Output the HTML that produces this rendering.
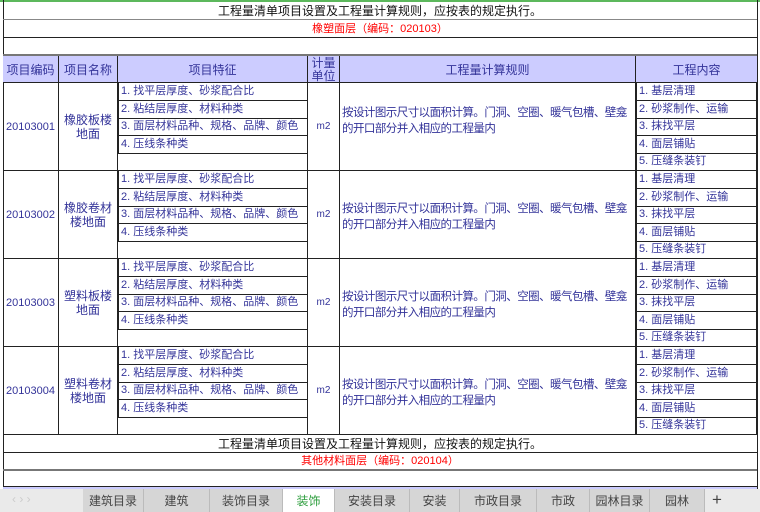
<!DOCTYPE html>
<html><head><meta charset="utf-8"><style>
*{margin:0;padding:0;box-sizing:border-box}
body{width:760px;height:512px;overflow:hidden;background:#fff;font-family:"Liberation Sans","Noto Sans CJK SC",sans-serif;font-size:11px;color:#333399;position:relative}
.a{position:absolute}
.hl{position:absolute;left:3px;width:754px;height:1px;background:#222}
.c{position:absolute;display:flex;align-items:center;justify-content:center;text-align:center;line-height:14px}
.blk{position:absolute;left:3px;width:754px;height:88px;border-bottom:1px solid #222}
.blk .v{position:absolute;top:0;height:88px;width:1px;background:#222}
.f{position:absolute;left:115px;width:190px;height:18px;border:1px solid #222;border-top:none;padding-left:2px;line-height:17px;white-space:nowrap;font-size:11px}
.w{position:absolute;left:633px;width:121px;height:18px;border:1px solid #222;border-top:none;padding-left:2px;line-height:17px;white-space:nowrap}
.r{position:absolute;left:339px;top:22px;width:292px;line-height:16px;font-size:11.5px;letter-spacing:-0.55px;white-space:nowrap}
.tab{position:absolute;top:489px;height:23px;background:#d6d6d6;color:#444;font-size:12px;display:flex;align-items:center;justify-content:center;border-right:1px solid #bbb}
</style></head><body>
<div class="a" style="left:0;top:0;width:760px;height:2px;background:#5cb85c"></div>
<div class="a" style="left:3px;top:0;width:1px;height:489px;background:#222"></div>
<div class="a" style="left:757px;top:0;width:1px;height:489px;background:#222"></div>
<div class="c" style="left:3px;top:2px;width:754px;height:17px;color:#111;font-size:12px">工程量清单项目设置及工程量计算规则，应按表的规定执行。</div>
<div class="hl" style="top:19px;background:#888"></div>
<div class="c" style="left:3px;top:20px;width:754px;height:17px;color:#f00">橡塑面层（编码：020103）</div>
<div class="hl" style="top:37px"></div>
<div class="hl" style="top:54px;height:2px;background:#777"></div>
<div class="a" style="left:3px;top:56px;width:754px;height:27px;background:#ccccff;border-bottom:1px solid #222"></div>
<div class="c" style="left:3px;top:56px;width:55px;height:27px;font-size:12px">项目编码</div>
<div class="c" style="left:58px;top:56px;width:59px;height:27px;font-size:12px;border-left:1px solid #222">项目名称</div>
<div class="c" style="left:117px;top:56px;width:190px;height:27px;font-size:12px;border-left:1px solid #222">项目特征</div>
<div class="c" style="left:307px;top:56px;width:32px;height:27px;font-size:12px;border-left:1px solid #222;line-height:13px">计量<br>单位</div>
<div class="c" style="left:339px;top:56px;width:296px;height:27px;font-size:12px;border-left:1px solid #222">工程量计算规则</div>
<div class="c" style="left:635px;top:56px;width:122px;height:27px;font-size:12px;border-left:1px solid #222">工程内容</div>

<div class="blk" style="top:83px">
<div class="v" style="left:55px"></div><div class="v" style="left:114px"></div><div class="v" style="left:304px"></div><div class="v" style="left:336px"></div><div class="v" style="left:632px"></div>
<div class="c" style="left:0;top:0;width:55px;height:88px">20103001</div>
<div class="c" style="left:56px;top:0;width:58px;height:88px;font-size:12px">橡胶板楼<br>地面</div>
<div class="f" style="top:0">1. 找平层厚度、砂浆配合比</div><div class="f" style="top:17.5px">2. 粘结层厚度、材料种类</div><div class="f" style="top:35px">3. 面层材料品种、规格、品牌、颜色</div><div class="f" style="top:52.5px">4. 压线条种类</div>
<div class="c" style="left:305px;top:0;width:31px;height:88px;font-size:10px">m2</div>
<div class="r">按设计图示尺寸以面积计算。门洞、空圈、暖气包槽、壁龛<br>的开口部分并入相应的工程量内</div>
<div class="w" style="top:0">1. 基层清理</div><div class="w" style="top:17.5px">2. 砂浆制作、运输</div><div class="w" style="top:35px">3. 抹找平层</div><div class="w" style="top:52.5px">4. 面层铺贴</div><div class="w" style="top:70px;border-bottom:none">5. 压缝条装钉</div>
</div>
<div class="blk" style="top:171px">
<div class="v" style="left:55px"></div><div class="v" style="left:114px"></div><div class="v" style="left:304px"></div><div class="v" style="left:336px"></div><div class="v" style="left:632px"></div>
<div class="c" style="left:0;top:0;width:55px;height:88px">20103002</div>
<div class="c" style="left:56px;top:0;width:58px;height:88px;font-size:12px">橡胶卷材<br>楼地面</div>
<div class="f" style="top:0">1. 找平层厚度、砂浆配合比</div><div class="f" style="top:17.5px">2. 粘结层厚度、材料种类</div><div class="f" style="top:35px">3. 面层材料品种、规格、品牌、颜色</div><div class="f" style="top:52.5px">4. 压线条种类</div>
<div class="c" style="left:305px;top:0;width:31px;height:88px;font-size:10px">m2</div>
<div class="r" style="top:30px">按设计图示尺寸以面积计算。门洞、空圈、暖气包槽、壁龛<br>的开口部分并入相应的工程量内</div>
<div class="w" style="top:0">1. 基层清理</div><div class="w" style="top:17.5px">2. 砂浆制作、运输</div><div class="w" style="top:35px">3. 抹找平层</div><div class="w" style="top:52.5px">4. 面层铺贴</div><div class="w" style="top:70px;border-bottom:none">5. 压缝条装钉</div>
</div>
<div class="blk" style="top:259px">
<div class="v" style="left:55px"></div><div class="v" style="left:114px"></div><div class="v" style="left:304px"></div><div class="v" style="left:336px"></div><div class="v" style="left:632px"></div>
<div class="c" style="left:0;top:0;width:55px;height:88px">20103003</div>
<div class="c" style="left:56px;top:0;width:58px;height:88px;font-size:12px">塑料板楼<br>地面</div>
<div class="f" style="top:0">1. 找平层厚度、砂浆配合比</div><div class="f" style="top:17.5px">2. 粘结层厚度、材料种类</div><div class="f" style="top:35px">3. 面层材料品种、规格、品牌、颜色</div><div class="f" style="top:52.5px">4. 压线条种类</div>
<div class="c" style="left:305px;top:0;width:31px;height:88px;font-size:10px">m2</div>
<div class="r" style="top:30px">按设计图示尺寸以面积计算。门洞、空圈、暖气包槽、壁龛<br>的开口部分并入相应的工程量内</div>
<div class="w" style="top:0">1. 基层清理</div><div class="w" style="top:17.5px">2. 砂浆制作、运输</div><div class="w" style="top:35px">3. 抹找平层</div><div class="w" style="top:52.5px">4. 面层铺贴</div><div class="w" style="top:70px;border-bottom:none">5. 压缝条装钉</div>
</div>
<div class="blk" style="top:347px">
<div class="v" style="left:55px"></div><div class="v" style="left:114px"></div><div class="v" style="left:304px"></div><div class="v" style="left:336px"></div><div class="v" style="left:632px"></div>
<div class="c" style="left:0;top:0;width:55px;height:88px">20103004</div>
<div class="c" style="left:56px;top:0;width:58px;height:88px;font-size:12px">塑料卷材<br>楼地面</div>
<div class="f" style="top:0">1. 找平层厚度、砂浆配合比</div><div class="f" style="top:17.5px">2. 粘结层厚度、材料种类</div><div class="f" style="top:35px">3. 面层材料品种、规格、品牌、颜色</div><div class="f" style="top:52.5px">4. 压线条种类</div>
<div class="c" style="left:305px;top:0;width:31px;height:88px;font-size:10px">m2</div>
<div class="r" style="top:30px">按设计图示尺寸以面积计算。门洞、空圈、暖气包槽、壁龛<br>的开口部分并入相应的工程量内</div>
<div class="w" style="top:0">1. 基层清理</div><div class="w" style="top:17.5px">2. 砂浆制作、运输</div><div class="w" style="top:35px">3. 抹找平层</div><div class="w" style="top:52.5px">4. 面层铺贴</div><div class="w" style="top:70px;border-bottom:none">5. 压缝条装钉</div>
</div>

<div class="c" style="left:3px;top:436px;width:754px;height:16px;color:#111;font-size:12px">工程量清单项目设置及工程量计算规则，应按表的规定执行。</div>
<div class="hl" style="top:452px"></div>
<div class="c" style="left:3px;top:453px;width:754px;height:16px;color:#f00">其他材料面层（编码：020104）</div>
<div class="hl" style="top:469px;height:2px;background:#777"></div>
<div class="hl" style="top:486px"></div>
<div class="a" style="left:3px;top:487px;width:754px;height:3px;background:#ccccff"></div>

<div class="a" style="left:0;top:489px;width:760px;height:23px;background:#eaeaea"></div>
<div class="a" style="left:12px;top:492px;color:#ccc;font-size:12px">‹ › ›</div>
<div class="tab" style="left:83px;width:61px">建筑目录</div>
<div class="tab" style="left:144px;width:66px">建筑</div>
<div class="tab" style="left:210px;width:73px">装饰目录</div>
<div class="tab" style="left:283px;width:52px;background:#fff;color:#2e9e3e">装饰</div>
<div class="tab" style="left:335px;width:75px">安装目录</div>
<div class="tab" style="left:410px;width:50px">安装</div>
<div class="tab" style="left:460px;width:77px">市政目录</div>
<div class="tab" style="left:537px;width:53px">市政</div>
<div class="tab" style="left:590px;width:60px">园林目录</div>
<div class="tab" style="left:650px;width:55px">园林</div>
<div class="a" style="left:712px;top:489px;font-size:17px;color:#444;line-height:22px">+</div>
</body></html>
